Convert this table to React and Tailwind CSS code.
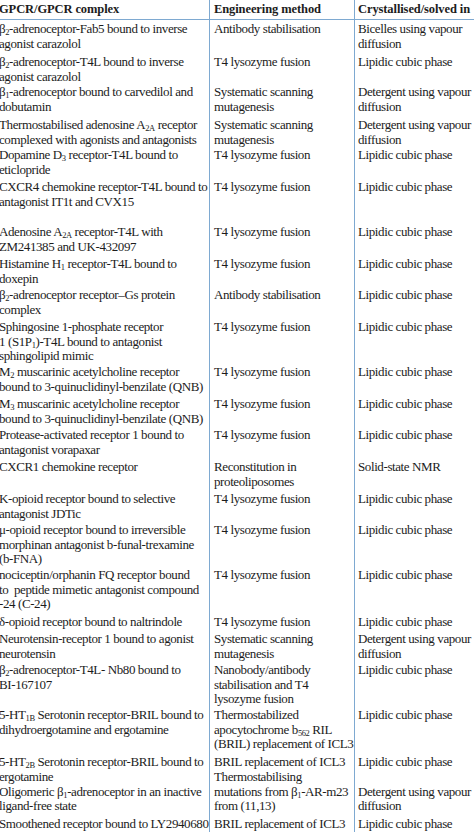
import React from 'react';

const b = (n) => <sub className="text-[8.5px]">{n}</sub>;

// each row: h = row height in px, c = lines for the 3 columns, off = blank lines before a cell
const rows = [
  { h: 33, c: [[<>β{b(2)}-adrenoceptor-Fab5 bound to inverse</>, 'agonist carazolol'], ['Antibody stabilisation'], ['Bicelles using vapour', 'diffusion']] },
  { h: 30, c: [[<>β{b(2)}-adrenoceptor-T4L bound to inverse</>, 'agonist carazolol'], ['T4 lysozyme fusion'], ['Lipidic cubic phase']] },
  { h: 33, c: [[<>β{b(1)}-adrenoceptor bound to carvedilol and</>, 'dobutamin'], ['Systematic scanning', 'mutagenesis'], ['Detergent using vapour', 'diffusion']] },
  { h: 30, c: [[<>Thermostabilised adenosine A{b('2A')} receptor</>, 'complexed with agonists and antagonists'], ['Systematic scanning', 'mutagenesis'], ['Detergent using vapour', 'diffusion']] },
  { h: 32, c: [[<>Dopamine D{b(3)} receptor-T4L bound to</>, 'eticlopride'], ['T4 lysozyme fusion'], ['Lipidic cubic phase']] },
  { h: 45, c: [['CXCR4 chemokine receptor-T4L bound to', 'antagonist IT1t and CVX15'], ['T4 lysozyme fusion'], ['Lipidic cubic phase']] },
  { h: 32, c: [[<>Adenosine A{b('2A')} receptor-T4L with</>, 'ZM241385 and UK-432097'], ['T4 lysozyme fusion'], ['Lipidic cubic phase']] },
  { h: 31, c: [[<>Histamine H{b(1)} receptor-T4L bound to</>, 'doxepin'], ['T4 lysozyme fusion'], ['Lipidic cubic phase']] },
  { h: 32, c: [[<>β{b(2)}-adrenoceptor receptor–Gs protein</>, 'complex'], ['Antibody stabilisation'], ['Lipidic cubic phase']] },
  { h: 45, c: [['Sphingosine 1-phosphate receptor', <>1 (S1P{b(1)})-T4L bound to antagonist</>, 'sphingolipid mimic'], ['T4 lysozyme fusion'], ['Lipidic cubic phase']] },
  { h: 32, c: [[<>M{b(2)} muscarinic acetylcholine receptor</>, 'bound to 3-quinuclidinyl-benzilate (QNB)'], ['T4 lysozyme fusion'], ['Lipidic cubic phase']] },
  { h: 31, c: [[<>M{b(3)} muscarinic acetylcholine receptor</>, 'bound to 3-quinuclidinyl-benzilate (QNB)'], ['T4 lysozyme fusion'], ['Lipidic cubic phase']] },
  { h: 32, c: [['Protease-activated receptor 1 bound to', 'antagonist vorapaxar'], ['T4 lysozyme fusion'], ['Lipidic cubic phase']] },
  { h: 32, c: [['CXCR1 chemokine receptor'], ['Reconstitution in', 'proteoliposomes'], ['Solid-state NMR']] },
  { h: 31, c: [['K-opioid receptor bound to selective', 'antagonist JDTic'], ['T4 lysozyme fusion'], ['Lipidic cubic phase']] },
  { h: 45, c: [['μ-opioid receptor bound to irreversible', 'morphinan antagonist b-funal-trexamine', '(b-FNA)'], ['T4 lysozyme fusion'], ['Lipidic cubic phase']] },
  { h: 47, c: [['nociceptin/orphanin FQ receptor bound', 'to  peptide mimetic antagonist compound', '-24 (C-24)'], ['T4 lysozyme fusion'], ['Lipidic cubic phase']] },
  { h: 17, c: [['δ-opioid receptor bound to naltrindole'], ['T4 lysozyme fusion'], ['Lipidic cubic phase']] },
  { h: 31, c: [['Neurotensin-receptor 1 bound to agonist', 'neurotensin'], ['Systematic scanning', 'mutagenesis'], ['Detergent using vapour', 'diffusion']] },
  { h: 45, c: [[<>β{b(2)}-adrenoceptor-T4L- Nb80 bound to</>, 'BI-167107'], ['Nanobody/antibody', 'stabilisation and T4', 'lysozyme fusion'], ['Lipidic cubic phase']] },
  { h: 47, c: [[<>5-HT{b('1B')} Serotonin receptor-BRIL bound to</>, 'dihydroergotamine and ergotamine'], ['Thermostabilized', <>apocytochrome b{b(562)} RIL</>, '(BRIL) replacement of ICL3'], ['Lipidic cubic phase']] },
  { h: 15, c: [[<>5-HT{b('2B')} Serotonin receptor-BRIL bound to</>, 'ergotamine'], ['BRIL replacement of ICL3'], ['Lipidic cubic phase']] },
  { h: 47, off: [1, 0, 1], c: [[<>Oligomeric β{b(1)}-adrenoceptor in an inactive</>, 'ligand-free state'], ['Thermostabilising', <>mutations from β{b(1)}-AR-m23</>, 'from (11,13)'], ['Detergent using vapour', 'diffusion']] },
  { h: 20, c: [['Smoothened receptor bound to LY2940680'], ['BRIL replacement of ICL3'], ['Lipidic cubic phase']] },
];

const pads = ['pl-0 -ml-[1px]', 'pl-[4px] border-l border-[#7ea9d1]', 'pl-[3px] border-l border-[#7ea9d1]'];

function Cell({ lines, col, off }) {
  return (
    <div className={`pt-[2px] ${pads[col]}`}>
      {off ? <div className="h-[14.6px]" /> : null}
      {lines.map((l, i) => (
        <div key={i} className="whitespace-pre">{l}</div>
      ))}
    </div>
  );
}

export default function App() {
  return (
    <div
      className="w-[474px] h-[832px] overflow-hidden bg-white text-[#1c1c1c] text-[13px] leading-[14.6px] tracking-[-0.4px]"
      style={{ fontFamily: '"Liberation Serif", serif' }}
    >
      <div className="grid grid-cols-[209px_145px_120px] h-[20px] border-b border-[#7ea9d1] font-bold text-[12.5px] tracking-[-0.1px]">
        <div className="pt-[2px] -ml-[1px] whitespace-nowrap">GPCR/GPCR complex</div>
        <div className="pt-[2px] pl-[4px] border-l border-[#7ea9d1] whitespace-nowrap">Engineering method</div>
        <div className="pt-[2px] pl-[3px] border-l border-[#7ea9d1] whitespace-nowrap">Crystallised/solved in</div>
      </div>
      {rows.map((r, i) => (
        <div key={i} className="grid grid-cols-[209px_145px_120px]" style={{ height: r.h }}>
          {r.c.map((lines, j) => (
            <Cell key={j} lines={lines} col={j} off={r.off ? r.off[j] : 0} />
          ))}
        </div>
      ))}
    </div>
  );
}
